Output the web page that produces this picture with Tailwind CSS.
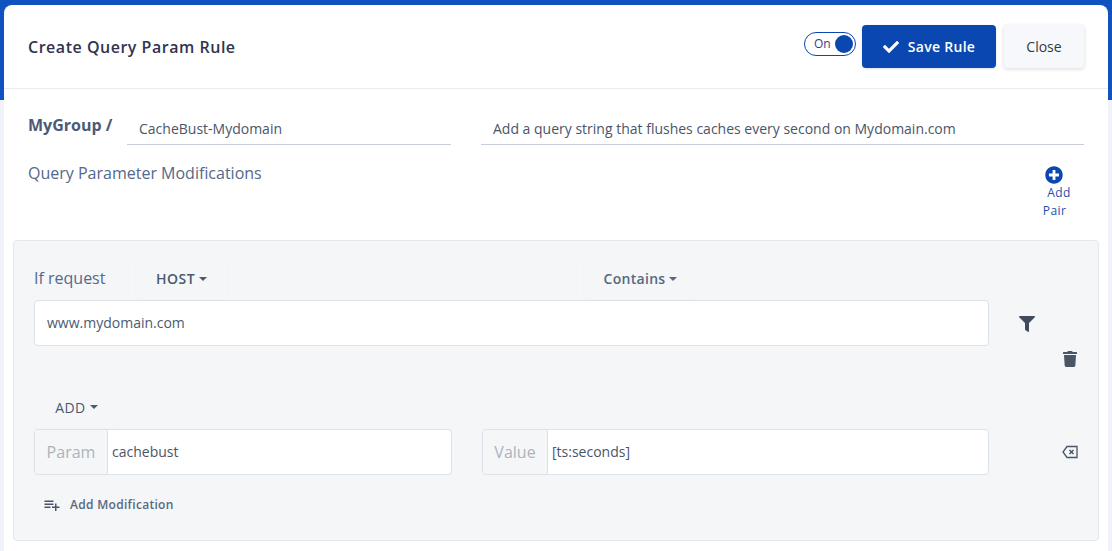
<!DOCTYPE html>
<html lang="en">
<head>
  <meta charset="UTF-8">
  <meta name="viewport" content="width=device-width, initial-scale=1.0">
  <script src="https://cdn.jsdelivr.net/npm/@tailwindcss/browser@4"></script>
  <title>Create Query Param Rule</title>
</head>
<body class="bg-[#f0f2f9] font-['Open_Sans',sans-serif] h-[551px] overflow-hidden">
  <!-- Blue band behind the card -->
  <div class="bg-[#1152c1] h-[100px] -mb-[100px]"></div>

  <div class="relative ml-1 mr-1 pt-[5px]">
    <div class="bg-white rounded-t-lg h-[546px]">
      <!-- Header -->
      <div class="h-[84px] border-b border-[#e9ebef] flex items-center pl-6 pr-6">
        <h1 class="text-[16px] font-semibold text-[#33334f] tracking-[0.52px] grow">Create Query Param Rule</h1>
        <div class="w-[52px] h-[24px] border border-[#0b47b0] rounded-full flex items-center justify-between pl-[9px] pr-[2px] mr-[6px] -mt-[5px]">
          <span class="text-[12px] text-[#33408a]">On</span>
          <span class="w-[18px] h-[18px] rounded-full bg-[#0b47b0]"></span>
        </div>
        <button class="w-[134px] h-[43px] bg-[#0b47b0] rounded text-white text-[14px] font-semibold tracking-[0.3px] flex items-center justify-center gap-[9px] shadow-sm">
          <svg class="w-[16px] h-[16px] fill-white mt-[1px]" viewBox="0 0 512 512"><path d="M173.898 439.404l-166.4-166.4c-9.997-9.997-9.997-26.206 0-36.204l36.203-36.204c9.997-9.998 26.207-9.998 36.204 0L192 312.69 432.095 72.596c9.997-9.997 26.207-9.997 36.204 0l36.203 36.204c9.997 9.997 9.997 26.206 0 36.204l-294.4 294.401c-9.998 9.997-26.207 9.997-36.204-.001z"/></svg>
          Save Rule
        </button>
        <button class="w-[80px] h-[43px] ml-2 bg-[#f6f8fb] rounded text-[#33383f] text-[14px] font-medium shadow-[0_1px_4px_rgba(0,0,0,0.15)]">Close</button>
      </div>

      <!-- Name row -->
      <div class="flex items-start pl-6 pr-6 pt-[15px]">
        <span class="text-[16px] font-bold text-[#4c5a78] w-[99px] leading-[42px] h-[38px]">MyGroup /</span>
        <div class="w-[324px] h-[41px] border-b border-[#c8ced8] text-[14px] text-[#4a5568] pl-3 leading-[50px]">CacheBust-Mydomain</div>
        <div class="w-[603px] h-[41px] ml-[30px] border-b border-[#c8ced8] text-[14px] text-[#4a5568] pl-3 leading-[50px]">Add a query string that flushes caches every second on Mydomain.com</div>
      </div>

      <!-- Sub heading and add pair -->
      <div class="flex justify-between pl-6 pr-[24px] h-[95px]">
        <div class="text-[16px] text-[#55678a] pt-[16px]">Query Parameter Modifications</div>
        <div class="w-[60px] pt-[21px] text-center text-[12px] font-medium tracking-[0.4px] text-[#1c4fb0] leading-[18px]">
          <svg class="w-[18px] h-[18px] fill-[#0b47b0] ml-[21px]" viewBox="0 0 512 512"><path d="M256 8C119 8 8 119 8 256s111 248 248 248 248-111 248-248S393 8 256 8zm144 276c0 6.6-5.4 12-12 12h-92v92c0 6.6-5.4 12-12 12h-56c-6.6 0-12-5.4-12-12v-92h-92c-6.6 0-12-5.4-12-12v-56c0-6.6 5.4-12 12-12h92v-92c0-6.6 5.4-12 12-12h56c6.6 0 12 5.4 12 12v92h92c6.6 0 12 5.4 12 12v56z"/></svg>
          <div class="pl-[10px]">Add</div>
          <div class="ml-[1px]">Pair</div>
        </div>
      </div>

      <!-- Rule panel -->
      <div class="ml-[9px] w-[1086px] h-[301px] bg-[#f4f6f8] border border-[#e4e8ee] rounded pl-5 pt-4">
        <div class="flex items-center h-[43px]">
          <span class="text-[16px] text-[#56688a] w-[101px] pb-[2px]">If request</span>
          <button class="w-[93px] h-[43px] border border-[#f2f4f7] rounded text-[14px] font-semibold tracking-[0.5px] text-[#4a5a70] flex items-center justify-center gap-1">HOST<span class="border-x-[4.5px] border-x-transparent border-t-[4.5px] border-t-[#4a5a70]"></span></button>
          <button class="w-[115px] h-[43px] ml-[355px] border border-[#f2f4f7] rounded text-[14px] font-semibold tracking-[0.3px] text-[#56687f] flex items-center justify-center gap-1">Contains<span class="border-x-[4.5px] border-x-transparent border-t-[4.5px] border-t-[#56687f]"></span></button>
        </div>

        <div class="flex items-center">
          <div class="w-[955px] h-[46px] bg-white border border-[#dde1e8] rounded text-[14px] text-[#4a5b70] pl-3 leading-[44px]">www.mydomain.com</div>
          <svg class="w-4 h-4 fill-[#414b5c] ml-[30px] mt-[1px]" viewBox="0 0 512 512"><path d="M487.976 0H24.028C2.71 0-8.047 25.866 7.058 40.971L192 225.941V432c0 7.831 3.821 15.17 10.237 19.662l80 55.98C298.02 518.69 320 507.493 320 487.98V225.941l184.947-184.97C520.021 25.896 509.338 0 487.976 0z"/></svg>
        </div>

        <div class="flex justify-end h-[43px] pr-[21px] pt-[5px]">
          <svg class="w-[14px] h-4 fill-[#4a5568]" viewBox="0 0 448 512"><path d="M432 32H312l-9.4-18.7A24 24 0 0 0 281.1 0H166.8a23.72 23.72 0 0 0-21.4 13.3L136 32H16A16 16 0 0 0 0 48v32a16 16 0 0 0 16 16h416a16 16 0 0 0 16-16V48a16 16 0 0 0-16-16zM53.2 467a48 48 0 0 0 47.9 45h245.8a48 48 0 0 0 47.9-45L416 128H32z"/></svg>
        </div>

        <button class="w-[85px] h-[40px] pb-1 border border-[#f2f4f7] rounded text-[14px] font-medium tracking-[0.4px] text-[#4a5a70] flex items-center justify-center gap-1">ADD<span class="border-x-[4.5px] border-x-transparent border-t-[4.5px] border-t-[#4a5a70]"></span></button>

        <div class="flex items-center">
          <div class="w-[418px] h-[46px] bg-white border border-[#dde1e8] rounded flex overflow-hidden">
            <span class="w-[73px] bg-[#f4f6f8] border-r border-[#dde1e8] text-[16px] text-[#adb3bd] text-center leading-[44px]">Param</span>
            <span class="text-[14px] text-[#4a5568] pl-1 leading-[44px]">cachebust</span>
          </div>
          <div class="w-[507px] h-[46px] ml-[30px] bg-white border border-[#dde1e8] rounded flex overflow-hidden">
            <span class="w-[65px] bg-[#f4f6f8] border-r border-[#dde1e8] text-[16px] text-[#adb3bd] text-center leading-[44px]">Value</span>
            <span class="text-[14px] text-[#4a5568] pl-1 leading-[44px]">[ts:seconds]</span>
          </div>
          <svg class="w-4 h-[14px] ml-[73px] stroke-[#4a5568] fill-none" viewBox="0 0 16 14"><path d="M5 1.5h10v11H5L1 7z" stroke-width="1.3"/><path d="M7.5 5l4 4M11.5 5l-4 4" stroke-width="1.5"/></svg>
        </div>

        <button class="mt-4 w-[148px] h-[28px] border border-[#f2f4f7] rounded text-[12px] font-semibold tracking-[0.3px] text-[#5a6880] flex items-center pl-2 gap-[9px]">
          <svg class="w-[18px] h-[18px] fill-[#4a5568]" viewBox="0 0 24 24"><path d="M14 10H2v2h12v-2zm0-4H2v2h12V6zm4 8v-4h-2v4h-4v2h4v4h2v-4h4v-2h-4zM2 16h8v-2H2v2z"/></svg>
          Add Modification
        </button>
      </div>
    </div>
  </div>
</body>
</html>
